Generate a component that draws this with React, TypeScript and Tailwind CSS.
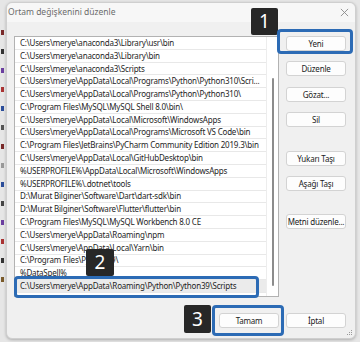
const rows = [
  'C:\\Users\\merye\\anaconda3\\Library\\usr\\bin',
  'C:\\Users\\merye\\anaconda3\\Library\\bin',
  'C:\\Users\\merye\\anaconda3\\Scripts',
  'C:\\Users\\merye\\AppData\\Local\\Programs\\Python\\Python310\\Scri...',
  'C:\\Users\\merye\\AppData\\Local\\Programs\\Python\\Python310\\',
  'C:\\Program Files\\MySQL\\MySQL Shell 8.0\\bin\\',
  'C:\\Users\\merye\\AppData\\Local\\Microsoft\\WindowsApps',
  'C:\\Users\\merye\\AppData\\Local\\Programs\\Microsoft VS Code\\bin',
  'C:\\Program Files\\JetBrains\\PyCharm Community Edition 2019.3\\bin',
  'C:\\Users\\merye\\AppData\\Local\\GitHubDesktop\\bin',
  '%USERPROFILE%\\AppData\\Local\\Microsoft\\WindowsApps',
  '%USERPROFILE%\\.dotnet\\tools',
  'D:\\Murat Bilginer\\Software\\Dart\\dart-sdk\\bin',
  'D:\\Murat Bilginer\\Software\\Flutter\\flutter\\bin',
  'C:\\Program Files\\MySQL\\MySQL Workbench 8.0 CE',
  'C:\\Users\\merye\\AppData\\Roaming\\npm',
  'C:\\Users\\merye\\AppData\\Local\\Yarn\\bin',
  'C:\\Program Files\\Python39\\',
  '%DataSpell%',
  'C:\\Users\\merye\\AppData\\Roaming\\Python\\Python39\\Scripts',
];

// little bits of the window behind the dialog
const marks = ['#7a2a2a', '#333', '#6b3fa0', '#a33', '#2b4d9a', '#555', '#7a2a2a', '#999', '#2b4d9a', '#444', '#6b3fa0', '#a33', '#333', '#7a5a2a'];

function Btn({ label, className = '' }: { label: string; className?: string }) {
  return (
    <div
      className={`h-[15px] w-[60px] flex items-center justify-center whitespace-nowrap rounded-[3px] border border-[#d3d3d3] bg-[#fdfdfd] text-[8px] tracking-[-0.2px] text-[#1b1b1b] ${className}`}
    >
      {label}
    </div>
  );
}

function Badge({ n, className }: { n: string; className: string }) {
  return (
    <div className={`absolute flex items-center justify-center rounded-[2px] bg-[#272727] text-[19px] leading-none text-white ${className}`}>
      {n}
    </div>
  );
}

export default function App() {
  return (
    <div
      className="w-[360px] h-[342px] flex bg-[#e6e6e6] overflow-hidden"
      style={{ fontFamily: '"Noto Sans", "Open Sans", sans-serif' }}
    >
      <div className="w-[6px] flex flex-col gap-[14px] pt-[30px] pl-[1px]">
        {marks.map((c, i) => (
          <div key={i} className="h-[5px] w-[3px]" style={{ backgroundColor: c }} />
        ))}
      </div>

      <div className="relative mt-[2px] mb-[3px] w-[350px] flex flex-col rounded-[6px] border border-[#cfcfcf] bg-[#f0f0f0] shadow-[0_1px_3px_rgba(0,0,0,0.25)]">
        <div className="h-[19px] flex items-center justify-between pl-[1px] pr-[6px] rounded-t-[6px] bg-[#f7f7f7]">
          <span className="text-[8.5px] text-[#6b6b6b]">Ortam değişkenini düzenle</span>
          <svg width="9" height="9" viewBox="0 0 10 10" className="stroke-[#8a8a8a]">
            <path d="M1 1 L9 9 M9 1 L1 9" strokeWidth="1" />
          </svg>
        </div>

        <div className="flex-1 flex flex-col pl-[7px] pr-[9px] pt-[14px]">
          <div className="flex gap-[7px]">
            <div className="w-[265px] h-[261px] flex border border-[#b2b2b2] bg-white">
              <div className="flex-1 min-w-0 flex flex-col">
                {rows.map((r, i) => (
                  <div
                    key={i}
                    className={`h-[12.8px] shrink-0 flex items-center pl-[5px] border-b border-[#e8e8e8] text-[8px] tracking-[-0.2px] whitespace-nowrap overflow-hidden text-[#1e1e1e] ${i === rows.length - 1 ? 'bg-[#ebebeb]' : ''}`}
                  >
                    {r}
                  </div>
                ))}
              </div>
              <div className="w-[12px] border-l border-[#ededed] flex justify-center pt-[41px] pb-[10px]">
                <div className="w-[2px] h-[208px] rounded-full bg-[#8c8c8c]" />
              </div>
            </div>

            <div className="flex flex-col">
              <Btn label="Yeni" />
              <Btn label="Düzenle" className="mt-[10px]" />
              <Btn label="Gözat..." className="mt-[11px]" />
              <Btn label="Sil" className="mt-[10px]" />
              <Btn label="Yukarı Taşı" className="mt-[24px]" />
              <Btn label="Aşağı Taşı" className="mt-[10px]" />
              <Btn label="Metni düzenle..." className="mt-[23px]" />
            </div>
          </div>

          <div className="flex justify-end gap-[7px] mt-[16px]">
            <Btn label="Tamam" />
            <Btn label="İptal" />
          </div>
        </div>

        <svg width="6" height="6" viewBox="0 0 6 6" className="absolute right-[2px] bottom-[2px] fill-[#9a9a9a]">
          <rect x="4" y="0" width="1" height="1" />
          <rect x="2" y="2" width="1" height="1" />
          <rect x="4" y="2" width="1" height="1" />
          <rect x="0" y="4" width="1" height="1" />
          <rect x="2" y="4" width="1" height="1" />
          <rect x="4" y="4" width="1" height="1" />
        </svg>

        {/* annotations */}
        <Badge n="1" className="left-[244px] top-[5px] w-[27px] h-[27px]" />
        <div className="absolute left-[270px] top-[26px] w-[76px] h-[25px] rounded-[4px] border-[3px] border-[#2c6bb5]" />
        <Badge n="2" className="left-[79px] top-[246px] w-[28px] h-[27px]" />
        <div className="absolute left-[7px] top-[273px] w-[245px] h-[22px] rounded-[4px] border-[3px] border-[#2c6bb5]" />
        <Badge n="3" className="left-[177px] top-[302px] w-[27px] h-[28px]" />
        <div className="absolute left-[205px] top-[302px] w-[72px] h-[31px] rounded-[4px] border-[3px] border-[#2c6bb5]" />
      </div>
    </div>
  );
}
